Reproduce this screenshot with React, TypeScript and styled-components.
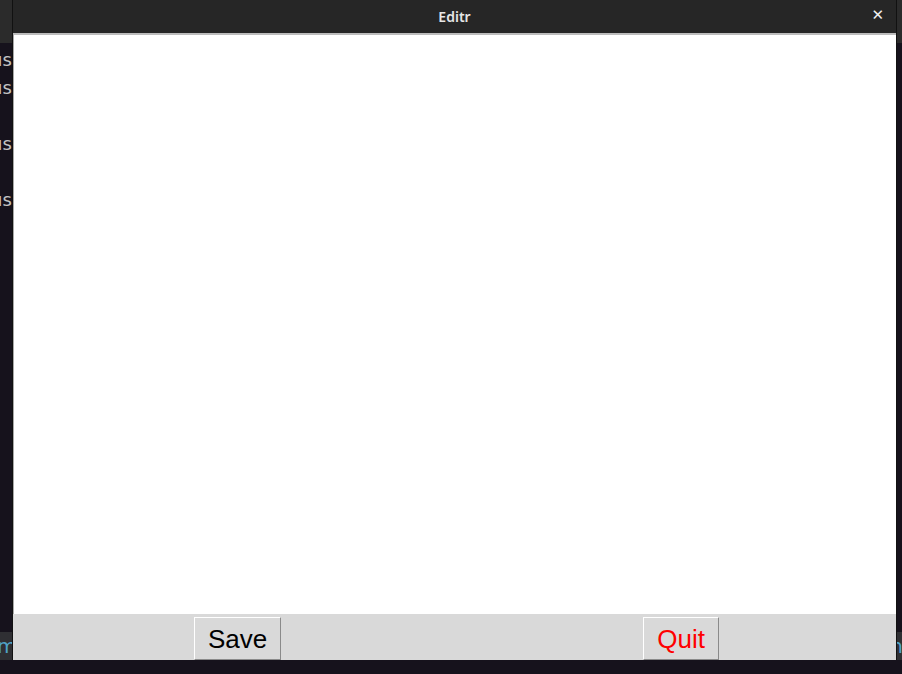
import React, { ReactElement } from 'react';
import styled, { createGlobalStyle } from 'styled-components';

const GlobalStyle = createGlobalStyle`
  html, body {
    margin: 0;
    padding: 0;
    background: #16121c;
    overflow: hidden;
  }
`;

const Desktop = styled.div`
  height: 674px;
  position: relative;
  width: 902px;
`;

// the terminal that sits behind the editor window
const Terminal = styled.div`
  display: flex;
  flex-direction: column;
  height: 660px;
  width: 100%;
`;
const TerminalHeader = styled.div`
  background: #2b2b2b;
  height: 43px;
`;
const TerminalBody = styled.div`
  flex: 1;
  padding-top: 3px;
`;
const TerminalLine = styled.div`
  color: #c4c4c4;
  font-family: 'DejaVu Sans', sans-serif;
  font-size: 18px;
  height: 28px;
  line-height: 28px;
  margin-left: -9px;
  white-space: pre;
`;
const TerminalStatus = styled.div`
  background: #2f2f33;
  color: #4fa3c7;
  display: flex;
  font-family: 'DejaVu Sans', sans-serif;
  font-size: 20px;
  height: 28px;
  justify-content: space-between;
  line-height: 28px;
`;
const StatusText = styled.span<{ shift: number }>`
  margin-left: ${ props => props.shift }px;
  margin-right: ${ props => -props.shift }px;
`;

const Window = styled.div`
  background: #262626;
  border-left: 1px solid #111;
  border-right: 1px solid #111;
  display: flex;
  flex-direction: column;
  height: 660px;
  left: 12px;
  position: absolute;
  top: 0;
  width: 883px;
`;
const TitleBar = styled.div`
  align-items: center;
  color: #e6e6e6;
  display: flex;
  flex: 0 0 33px;
  font-family: 'Noto Sans', sans-serif;
  font-size: 14px;
  font-weight: 600;
  justify-content: center;
  position: relative;
`;
const CloseButton = styled.span`
  color: #f0f0f0;
  font-family: 'DejaVu Sans', sans-serif;
  font-size: 15px;
  font-weight: bold;
  position: absolute;
  right: 12px;
  top: 6px;
`;
const TextArea = styled.textarea`
  background: #fff;
  border: none;
  border-left: 1px solid #a8a8a8;
  border-top: 2px solid #bcbcbc;
  box-sizing: border-box;
  display: block;
  flex: 1;
  margin: 0;
  outline: none;
  resize: none;
  width: 100%;
`;
const ButtonBar = styled.div`
  align-items: flex-start;
  background: #d9d9d9;
  box-sizing: border-box;
  display: flex;
  flex: 0 0 46px;
  gap: 362px;
  padding: 3px 0 0 181px;
`;
const Button = styled.button<{ danger?: boolean }>`
  background: #d9d9d9;
  border: 1px solid;
  border-color: #ffffff #8a8a8a #8a8a8a #ffffff;
  box-sizing: border-box;
  color: ${ props => props.danger ? '#ff0000' : '#000' };
  font-family: 'Liberation Sans', Arial, sans-serif;
  font-size: 26px;
  height: 43px;
  line-height: 30px;
  margin: 0;
  padding: 1px 13px 0;
`;

const lines = ['us', 'us', '', 'us', '', 'us'];

export default function App(): ReactElement {
  return (
    <Desktop>
      <GlobalStyle />
      <Terminal>
        <TerminalHeader />
        <TerminalBody>
          { lines.map((line, index) => <TerminalLine key={ index }>{ line }</TerminalLine>) }
        </TerminalBody>
        <TerminalStatus>
          <StatusText shift={ -3 }>m</StatusText>
          <StatusText shift={ 1 }>h</StatusText>
        </TerminalStatus>
      </Terminal>
      <Window>
        <TitleBar>
          Editr
          <CloseButton>✕</CloseButton>
        </TitleBar>
        <TextArea />
        <ButtonBar>
          <Button>Save</Button>
          <Button danger>Quit</Button>
        </ButtonBar>
      </Window>
    </Desktop>
  );
}
